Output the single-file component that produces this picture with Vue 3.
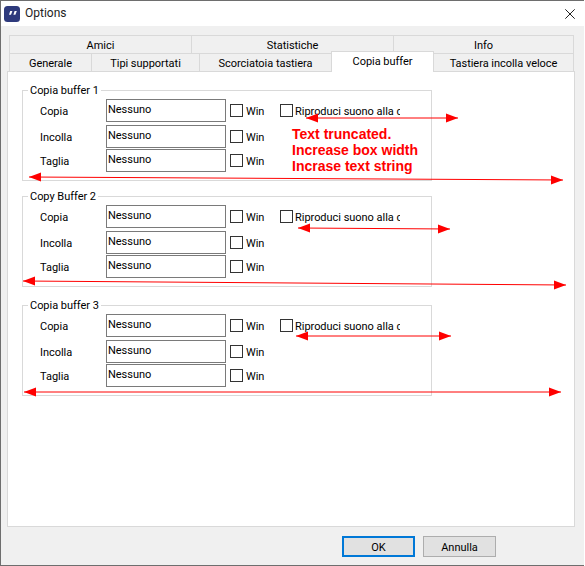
<script setup>
import { ref } from 'vue'

const topTabs = ['Amici', 'Statistiche', 'Info']
const bottomTabs = ['Generale', 'Tipi supportati', 'Scorciatoia tastiera', 'Copia buffer', 'Tastiera incolla veloce']
const activeTab = ref('Copia buffer')

const groups = ['Copia buffer 1', 'Copy Buffer 2', 'Copia buffer 3']
const actions = ['Copia', 'Incolla', 'Taglia']

const notes = ['Text truncated.', 'Increase box width', 'Incrase text string']

// red markup drawn on top of the dialog: [x1, y1, x2, y2]
const arrows = [
  [306, 118, 458, 118],
  [29, 177, 563, 180],
  [298, 228, 450, 229],
  [23, 281, 566, 285],
  [296, 336, 451, 336],
  [24, 392, 561, 392]
]

function head(x, y, dir) {
  return `${x},${y} ${x - dir * 12},${y - 4.5} ${x - dir * 12},${y + 4.5}`
}
</script>

<template>
  <div class="window">
    <div class="titlebar">
      <svg class="app-icon" width="16" height="16" viewBox="0 0 16 16">
        <rect width="16" height="16" rx="3.5" fill="#2e3a7c" />
        <path d="M6.2 5h2.2L7 8.8H5zM10.6 5h2.2l-1.4 3.8H9.4z" fill="#fff" />
      </svg>
      <span class="title">Options</span>
      <svg class="close" width="10" height="10" viewBox="0 0 10 10">
        <path d="M0.3 0.3L9.7 9.7M9.7 0.3L0.3 9.7" stroke="#222" stroke-width="1" fill="none" />
      </svg>
    </div>

    <div class="body">
      <div class="tabs tabs-top">
        <div v-for="tab in topTabs" :key="tab" class="tab">{{ tab }}</div>
      </div>
      <div class="tabs tabs-bottom">
        <div
          v-for="tab in bottomTabs"
          :key="tab"
          class="tab"
          :class="{ active: tab === activeTab }"
          @click="activeTab = tab"
        >{{ tab }}</div>
      </div>

      <div class="panel">
        <fieldset v-for="group in groups" :key="group" class="group">
          <legend>{{ group }}</legend>
          <div v-for="(action, i) in actions" :key="action" class="row">
            <span class="text">{{ action }}</span>
            <input class="key" type="text" value="Nessuno" readonly />
            <label class="check">
              <input type="checkbox" />
              <span class="text">Win</span>
            </label>
            <label v-if="i === 0" class="check sound">
              <input type="checkbox" />
              <span class="text">Riproduci suono alla copia</span>
            </label>
          </div>
        </fieldset>
      </div>

      <div class="footer">
        <button class="btn default">OK</button>
        <button class="btn">Annulla</button>
      </div>
    </div>

    <svg class="markup" width="585" height="566">
      <g v-for="a in arrows" :key="a[0] + '-' + a[1]">
        <line :x1="a[0]" :y1="a[1]" :x2="a[2]" :y2="a[3]" stroke="#f00" stroke-width="1" />
        <polygon :points="head(a[0], a[1], -1)" fill="#f00" />
        <polygon :points="head(a[2], a[3], 1)" fill="#f00" />
      </g>
    </svg>
    <div class="note">
      <div v-for="line in notes" :key="line">{{ line }}</div>
    </div>
  </div>
</template>

<style scoped>
.window {
  position: relative;
  width: 584px;
  height: 566px;
  box-sizing: border-box;
  display: flex;
  flex-direction: column;
  border-top: 1px solid #6e6e6e;
  border-left: 1px solid #6e6e6e;
  border-bottom: 1px solid #6e6e6e;
  font-family: Roboto, sans-serif;
  font-size: 11px;
  letter-spacing: -0.03px;
  color: #000;
}

.titlebar {
  height: 25px;
  display: flex;
  align-items: center;
  padding: 0 9px 0 3px;
  background: #fff;
}

.app-icon {
  margin-right: 5px;
}

.title {
  font-size: 12px;
  letter-spacing: 0;
  flex: 1;
  padding-bottom: 2px;
  color: #222;
}

.body {
  flex: 1;
  display: flex;
  flex-direction: column;
  padding: 9px 9px 0 6px;
  background: #f0f0f0;
}

.tabs {
  display: grid;
  height: 18px;
  margin-left: 2px;
}

.tabs-top {
  grid-template-columns: 182px 202px 180px;
}

.tabs-bottom {
  grid-template-columns: 82px 108px 132px 102px 140px;
}

.tab {
  box-sizing: border-box;
  display: flex;
  align-items: center;
  justify-content: center;
  height: 19px;
  padding-top: 2px;
  border: 1px solid #d9d9d9;
  background: #f0f0f0;
  margin-right: -1px;
}

.tab.active {
  position: relative;
  z-index: 1;
  height: 21px;
  margin-top: -2px;
  padding-top: 0;
  padding-bottom: 2px;
  background: #fff;
  border-bottom: none;
}

.panel {
  height: 456px;
  box-sizing: border-box;
  border: 1px solid #d9d9d9;
  background: #fff;
  padding: 9px 0 0 14px;
}

.group {
  width: 410px;
  height: 100px;
  box-sizing: border-box;
  margin: 0 0 6px;
  padding: 0 0 0 17px;
  border: 1px solid #d9d9d9;
  min-width: 0;
}

.group:last-child {
  margin-top: 9px;
}

legend {
  margin-left: -12px;
  padding: 2px 2px 0;
  line-height: 16px;
}

.row {
  display: grid;
  grid-template-columns: 66px 120px 54px 120px;
  align-items: center;
  height: 23px;
  margin-bottom: 1px;
}

.row:first-of-type {
  margin-bottom: 3px;
}

.text {
  padding-top: 1px;
}

.key {
  box-sizing: border-box;
  width: 120px;
  height: 23px;
  margin: 0;
  padding: 0 0 3px 1px;
  border: 1px solid #7a7a7a;
  border-radius: 0;
  outline: none;
  font: inherit;
  letter-spacing: inherit;
  color: #000;
  background: #fff;
}

.check {
  display: flex;
  align-items: center;
  padding-left: 4px;
  white-space: nowrap;
  overflow: hidden;
}

.check.sound {
  padding-left: 0;
}

.check input {
  appearance: none;
  flex: none;
  width: 13px;
  height: 13px;
  margin: 0 3px 0 0;
  border: 1px solid #333;
  border-radius: 0;
  background: #fff;
}

.check.sound input {
  margin-right: 2px;
}

.footer {
  flex: 1;
  display: flex;
  justify-content: flex-end;
  align-items: flex-start;
  gap: 8px;
  padding: 9px 79px 0 0;
}

.btn {
  box-sizing: border-box;
  width: 73px;
  height: 21px;
  padding: 1px 0 0;
  border: 1px solid #adadad;
  border-radius: 0;
  background: #e1e1e1;
  font: inherit;
  color: #000;
}

.btn.default {
  border: 2px solid #0078d7;
}

.markup {
  position: absolute;
  left: -1px;
  top: -1px;
  pointer-events: none;
}

.note {
  position: absolute;
  left: 291px;
  top: 125px;
  font-family: "Liberation Sans", sans-serif;
  font-size: 14px;
  font-weight: 700;
  line-height: 16px;
  letter-spacing: 0;
  color: #f00;
}
</style>

<style>
body {
  background: #fff;
}
</style>
